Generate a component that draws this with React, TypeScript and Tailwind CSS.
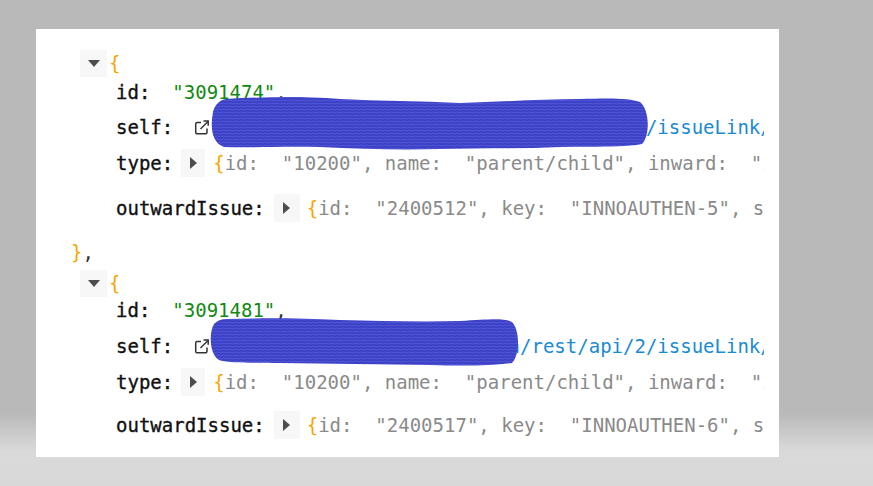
import React from "react";

const mono = { fontFamily: '"DejaVu Sans Mono", "Liberation Mono", monospace' };

function Down() {
  return (
    <div className="flex h-[27px] w-[27px] items-center justify-center bg-[#f7f7f7]">
      <svg width="12" height="7" viewBox="0 0 12 7">
        <path d="M0 0H12L6 7Z" fill="#4d4d4d" />
      </svg>
    </div>
  );
}

function Right({ w }: { w: string }) {
  return (
    <div className={`flex h-[28px] ${w} items-center justify-center bg-[#f7f7f7]`}>
      <svg width="7" height="12" viewBox="0 0 7 12">
        <path d="M0 0V12L7 6Z" fill="#4d4d4d" />
      </svg>
    </div>
  );
}

function LinkIcon() {
  return (
    <svg width="15" height="15" viewBox="0 0 15 15" fill="none" stroke="#333" strokeWidth="1.5">
      <path d="M7 2.5H3.2A1.5 1.5 0 0 0 1.7 4v8.3a1.5 1.5 0 0 0 1.5 1.5h8.3a1.5 1.5 0 0 0 1.5-1.5V8.5" />
      <path d="M6.5 9L14 1.5" />
      <path d="M9.5 1H14.2V5.7" fill="none" />
    </svg>
  );
}

const Key = ({ children }: { children: React.ReactNode }) => (
  <span className="whitespace-pre text-[#111] [-webkit-text-stroke:0.35px_#111]">{children}</span>
);

export default function App() {
  const url = "https://jira.innocompany.vn/rest/api/2/issueLink/";
  const typePreview = '{id:  "10200", name:  "parent/child", inward:  "is parent of", outward:  "is child of"}';
  const objs = [
    { id: "3091474", num: "2400512", key: "INNOAUTHEN-5", hs: ["h-[30px]", "h-[28px]", "h-[42px]", "h-[30px]", "h-[60px]", "h-[28px]"] },
    { id: "3091481", num: "2400517", key: "INNOAUTHEN-6", hs: ["h-[34px]", "h-[20px]", "h-[52px]", "h-[20px]", "h-[66px]", "h-[0px]"] },
  ];
  return (
    <div
      className="relative h-[486px] w-[873px] overflow-hidden bg-[linear-gradient(to_bottom,#b8b9b8_0%,#b8b9b8_85%,#dadada_93%,#d8d8d8_100%)] pl-[36px] pt-[29px] text-[19px]"
      style={mono}
    >
      <div className="h-[428px] w-[743px] overflow-hidden bg-white">
        <div className="w-[728px] overflow-hidden pl-[35px] pt-[19px] leading-[20px]">
          {objs.map((o, i) => (
            <div key={i}>
              <div className={`flex ${o.hs[0]} items-center pl-[9px]`}>
                <Down />
                <span className="ml-[2px] text-[#f5a500]">{"{"}</span>
              </div>
              <div className={`flex ${o.hs[1]} items-center whitespace-nowrap pl-[45px]`}>
                <Key>id:</Key>
                <span className="ml-[22px] whitespace-pre text-[#108a10]">"{o.id}"</span>
                <span className="whitespace-pre text-[#333]">,</span>
              </div>
              <div className={`flex ${o.hs[2]} items-center whitespace-nowrap pl-[45px]`}>
                <Key>self:</Key>
                <span className="ml-[21px] flex items-center">
                  <LinkIcon />
                </span>
                <span className="ml-[2px] whitespace-pre text-[#1a8bd2]">{url + o.id}</span>
              </div>
              <div className={`flex ${o.hs[3]} items-center whitespace-nowrap pl-[45px]`}>
                <Key>type:</Key>
                <span className="ml-[8px]">
                  <Right w="w-[24px]" />
                </span>
                <span className="ml-[8px] text-[#f5a500]">{"{"}</span>
                <span className="whitespace-pre text-[#8a8a8a]">{typePreview.slice(1)}</span>
              </div>
              <div className={`flex ${o.hs[4]} items-center whitespace-nowrap pl-[45px]`}>
                <Key>outwardIssue:</Key>
                <span className="ml-[9px]">
                  <Right w="w-[26px]" />
                </span>
                <span className="ml-[7px] text-[#f5a500]">{"{"}</span>
                <span className="whitespace-pre text-[#8a8a8a]">{`id:  "${o.num}", key:  "${o.key}", self:  "${url}"}`}</span>
              </div>
              {i === 0 && (
                <div className={`flex ${o.hs[5]} items-center`}>
                  <span className="text-[#f5a500]">{"}"}</span>
                  <span className="text-[#333]">,</span>
                </div>
              )}
            </div>
          ))}
        </div>
      </div>

      <svg className="pointer-events-none absolute left-0 top-0" width="873" height="486" viewBox="0 0 873 486">
        <defs>
          <pattern id="tex" width="6" height="3" patternUnits="userSpaceOnUse">
            <rect width="6" height="3" fill="#3a3fc4" />
            <path d="M0 1.5Q1.5 0.5 3 1.5T6 1.5" stroke="#5b61de" strokeWidth="0.8" fill="none" />
          </pattern>
        </defs>
        <path
          d="M226 99C260 97 300 96 340 99C380 101 420 101 460 103C500 102 540 99 580 99C610 98 630 98 640 102C650 110 650 136 642 144C620 148 590 146 560 147C520 149 480 148 440 149C400 150 360 149 320 147C280 146 250 148 224 147C212 143 210 128 213 112C215 104 220 100 226 99Z"
          fill="url(#tex)"
        />
        <path
          d="M226 319C260 318 300 318 340 320C380 321 420 322 460 321C490 319 505 318 512 322C520 330 520 355 512 363C490 366 460 366 430 365C380 364 330 364 280 363C255 362 232 364 219 360C209 354 209 332 214 324C218 320 222 319 226 319Z"
          fill="url(#tex)"
        />
      </svg>
    </div>
  );
}
